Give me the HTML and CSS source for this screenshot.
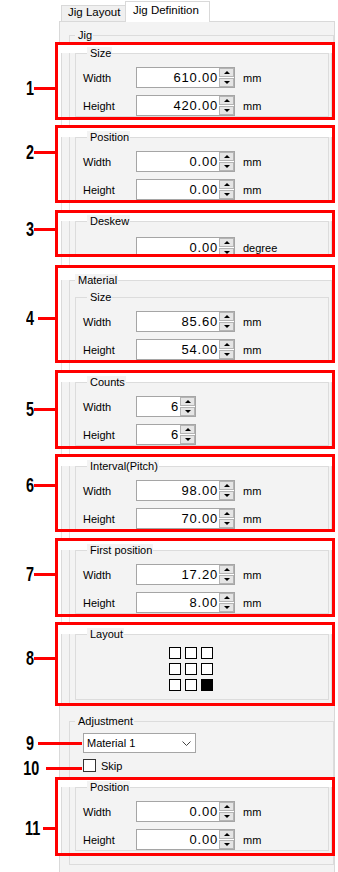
FILE: index.html
```html
<!DOCTYPE html>
<html lang="en">
<head>
    <meta charset="UTF-8">
    <meta name="viewport" content="width=device-width, initial-scale=1.0">
    <title>Jig Definition</title>
    <link rel="stylesheet" href="styles.css">
</head>
<body>
    <div class="tabs">
        <div class="tab">Jig Layout</div>
        <div class="tab active">Jig Definition</div>
    </div>

    <div class="panel head">
        <div class="lane"><span class="legend">Jig</span></div>
    </div>

    <!-- 1: jig size -->
    <div class="row r-size">
        <div class="callout"><span class="num">1</span><span class="line"></span></div>
        <div class="cut">
            <div class="pane"><div class="lane">
                <div class="group">
                    <span class="legend">Size</span>
                    <div class="field"><span class="label">Width</span><div class="spin"><span class="val">610.00</span><span class="btns"><i class="up"></i><i class="down"></i></span></div><span class="unit">mm</span></div>
                    <div class="field"><span class="label">Height</span><div class="spin"><span class="val">420.00</span><span class="btns"><i class="up"></i><i class="down"></i></span></div><span class="unit">mm</span></div>
                </div>
            </div></div>
        </div>
    </div>
    <div class="gap h5"></div>

    <!-- 2: jig position -->
    <div class="row r-pos">
        <div class="callout"><span class="num">2</span><span class="line"></span></div>
        <div class="cut">
            <div class="pane"><div class="lane">
                <div class="group">
                    <span class="legend">Position</span>
                    <div class="field"><span class="label">Width</span><div class="spin"><span class="val">0.00</span><span class="btns"><i class="up"></i><i class="down"></i></span></div><span class="unit">mm</span></div>
                    <div class="field"><span class="label">Height</span><div class="spin"><span class="val">0.00</span><span class="btns"><i class="up"></i><i class="down"></i></span></div><span class="unit">mm</span></div>
                </div>
            </div></div>
        </div>
    </div>
    <div class="gap h7"></div>

    <!-- 3: deskew -->
    <div class="row r-deskew">
        <div class="callout"><span class="num">3</span><span class="line"></span></div>
        <div class="cut">
            <div class="pane"><div class="lane">
                <div class="group">
                    <span class="legend">Deskew</span>
                    <div class="field"><span class="label"></span><div class="spin"><span class="val">0.00</span><span class="btns"><i class="up"></i><i class="down"></i></span></div><span class="unit">degree</span></div>
                </div>
            </div></div>
        </div>
    </div>
    <div class="gap h8"></div>

    <!-- 4: material size -->
    <div class="row r-mat">
        <div class="callout"><span class="num">4</span><span class="line"></span></div>
        <div class="cut">
            <div class="pane"><div class="lane top">
                <span class="legend">Material</span>
                <div class="group">
                    <span class="legend">Size</span>
                    <div class="field"><span class="label">Width</span><div class="spin"><span class="val">85.60</span><span class="btns"><i class="up"></i><i class="down"></i></span></div><span class="unit">mm</span></div>
                    <div class="field"><span class="label">Height</span><div class="spin"><span class="val">54.00</span><span class="btns"><i class="up"></i><i class="down"></i></span></div><span class="unit">mm</span></div>
                </div>
            </div></div>
        </div>
    </div>
    <div class="gap h7"></div>

    <!-- 5: counts -->
    <div class="row r-counts">
        <div class="callout"><span class="num">5</span><span class="line"></span></div>
        <div class="cut">
            <div class="pane"><div class="lane">
                <div class="group">
                    <span class="legend">Counts</span>
                    <div class="field"><span class="label">Width</span><div class="spin short"><span class="val">6</span><span class="btns"><i class="up"></i><i class="down"></i></span></div></div>
                    <div class="field"><span class="label">Height</span><div class="spin short"><span class="val">6</span><span class="btns"><i class="up"></i><i class="down"></i></span></div></div>
                </div>
            </div></div>
        </div>
    </div>
    <div class="gap h5"></div>

    <!-- 6: interval -->
    <div class="row r-pitch">
        <div class="callout"><span class="num">6</span><span class="line"></span></div>
        <div class="cut">
            <div class="pane"><div class="lane">
                <div class="group">
                    <span class="legend">Interval(Pitch)</span>
                    <div class="field"><span class="label">Width</span><div class="spin"><span class="val">98.00</span><span class="btns"><i class="up"></i><i class="down"></i></span></div><span class="unit">mm</span></div>
                    <div class="field"><span class="label">Height</span><div class="spin"><span class="val">70.00</span><span class="btns"><i class="up"></i><i class="down"></i></span></div><span class="unit">mm</span></div>
                </div>
            </div></div>
        </div>
    </div>
    <div class="gap h6"></div>

    <!-- 7: first position -->
    <div class="row r-first">
        <div class="callout"><span class="num">7</span><span class="line"></span></div>
        <div class="cut">
            <div class="pane"><div class="lane">
                <div class="group">
                    <span class="legend">First position</span>
                    <div class="field"><span class="label">Width</span><div class="spin"><span class="val">17.20</span><span class="btns"><i class="up"></i><i class="down"></i></span></div><span class="unit">mm</span></div>
                    <div class="field"><span class="label">Height</span><div class="spin"><span class="val">8.00</span><span class="btns"><i class="up"></i><i class="down"></i></span></div><span class="unit">mm</span></div>
                </div>
            </div></div>
        </div>
    </div>
    <div class="gap h5"></div>

    <!-- 8: layout -->
    <div class="row r-layout">
        <div class="callout"><span class="num">8</span><span class="line"></span></div>
        <div class="cut">
            <div class="pane"><div class="lane">
                <div class="group">
                    <span class="legend">Layout</span>
                    <div class="grid">
                        <span></span><span></span><span></span>
                        <span></span><span></span><span></span>
                        <span></span><span></span><span class="on"></span>
                    </div>
                </div>
            </div></div>
        </div>
    </div>

    <!-- 9, 10: adjustment -->
    <div class="panel adjust">
        <div class="lane top">
            <span class="legend">Adjustment</span>
            <div class="select">
                <span class="pointer p9"><span class="num">9</span></span>
                <span>Material 1</span>
                <svg width="9" height="5" viewBox="0 0 9 5"><path d="M0.5 0.5 L4.5 4.5 L8.5 0.5" fill="none" stroke="#444" stroke-width="1"/></svg>
            </div>
            <div class="check">
                <span class="box"><span class="pointer p10"><span class="num">10</span></span></span>
                <span class="check-label">Skip</span>
            </div>
        </div>
    </div>

    <!-- 11: adjustment position -->
    <div class="row r-adj">
        <div class="callout"><span class="num">11</span><span class="line"></span></div>
        <div class="cut">
            <div class="pane"><div class="lane">
                <div class="group">
                    <span class="legend">Position</span>
                    <div class="field"><span class="label">Width</span><div class="spin"><span class="val">0.00</span><span class="btns"><i class="up"></i><i class="down"></i></span></div><span class="unit">mm</span></div>
                    <div class="field"><span class="label">Height</span><div class="spin"><span class="val">0.00</span><span class="btns"><i class="up"></i><i class="down"></i></span></div><span class="unit">mm</span></div>
                </div>
            </div></div>
        </div>
    </div>

    <div class="panel tail">
        <div class="lane"></div>
    </div>
</body>
</html>
```

FILE: styles.css
```css
* {
    box-sizing: border-box;
}

body {
    margin: 0;
    width: 338px;
    height: 872px;
    overflow: hidden;
    background: #fff;
    color: #000;
    font-family: "Liberation Sans", Arial, sans-serif;
    font-size: 11px;
}

/* tab strip */
.tabs {
    display: flex;
    align-items: flex-end;
    height: 21px;
    padding-left: 61px;
}

.tab {
    width: 65px;
    height: 16px;
    padding: 0 0 0 6px;
    border: 1px solid #d9d9d9;
    border-bottom: none;
    background: #f0f0f0;
    font-size: 11.5px;
    line-height: 13px;
}

.tab.active {
    position: relative;
    z-index: 1;
    width: 85px;
    height: 21px;
    margin-left: -1px;
    margin-bottom: -1px;
    padding: 2px 0 0 7px;
    background: #fff;
}

/* plain tab page area */
.panel {
    margin-left: 59px;
    width: 276px;
    border-left: 1px solid #d9d9d9;
    border-right: 1px solid #d9d9d9;
    background: #f3f3f3;
}

.panel .lane {
    margin-left: 9px;
}

.panel.head {
    height: 21px;
    border-top: 1px solid #d9d9d9;
}

.panel.head .lane {
    height: 7px;
    margin-top: 13px;
    border-top: 1px solid #dcdcdc;
}

.panel.adjust {
    height: 71px;
    padding-top: 15px;
}

.panel.adjust .lane {
    height: 100%;
}

.panel.tail {
    height: 16px;
}

.panel.tail .lane {
    height: 9px;
    border-bottom: 1px solid #dcdcdc;
}

/* group boxes */
.lane {
    border-left: 1px solid #dcdcdc;
    border-right: 1px solid #dcdcdc;
}

.lane.top {
    border-top: 1px solid #dcdcdc;
}

.legend {
    display: block;
    width: max-content;
    margin: -7px 0 0 4px;
    padding: 0 1px 0 3px;
    background: #f3f3f3;
    line-height: 13px;
}

.lane > .legend {
    margin-left: 5px;
}

.group {
    margin: 9px 2px 0 5px;
    padding: 0 6px 0 7px;
    border: 1px solid #dcdcdc;
}

.field {
    display: flex;
    align-items: center;
    height: 21px;
    margin-top: 7px;
}

.label {
    width: 53px;
    flex: none;
}

.spin {
    display: flex;
    width: 99px;
    height: 21px;
    border: 1px solid #a5a5a5;
    background: #fff;
}

.spin.short {
    width: 60px;
}

.val {
    flex: 1;
    padding-right: 1px;
    text-align: right;
    font-size: 13px;
    line-height: 19px;
    letter-spacing: 0.8px;
}

.btns {
    display: grid;
    grid-template-rows: 1fr 1fr;
    gap: 1px;
    width: 15px;
}

.btns i {
    display: flex;
    align-items: center;
    justify-content: center;
    border: 1px solid #b4b4b4;
    background: #e5e5e5;
}

.btns i::before {
    content: "";
    border-left: 3px solid transparent;
    border-right: 3px solid transparent;
}

.btns .up::before {
    border-bottom: 3px solid #000;
}

.btns .down::before {
    border-top: 3px solid #000;
}

.unit {
    margin-left: 8px;
}

.grid {
    display: grid;
    grid-template-columns: repeat(3, 12px);
    grid-auto-rows: 12px;
    gap: 4px;
    margin: 6px 0 8px 86px;
}

.grid span {
    border: 1px solid #000;
    background: #fff;
}

.grid .on {
    background: #000;
}

/* annotated cut-outs */
.row {
    display: flex;
    align-items: flex-start;
}

.callout {
    display: flex;
    align-items: center;
    justify-content: flex-end;
    flex: none;
    width: 55px;
    height: 20px;
    box-sizing: content-box;
}

.num {
    display: block;
    font-family: "Liberation Sans", Arial, sans-serif;
    font-size: 20px;
    font-weight: bold;
    line-height: 20px;
    color: #000;
    transform: scaleX(0.72);
    transform-origin: right center;
}

.line {
    width: 21px;
    height: 3px;
    background: #f00;
}

.cut {
    flex: none;
    width: 280px;
    height: 78px;
    border: 3px solid #f00;
    background: #fff;
    overflow: hidden;
}

.pane {
    height: 100%;
    margin-left: 3px;
    padding-left: 7px;
    border-left: 1px solid #dadada;
    background: #f3f3f3;
}

.pane .lane {
    height: 100%;
}

.pane .lane.top {
    margin-top: 12px;
}

.gap {
    width: 9px;
    margin-left: 61px;
    border-left: 1px solid #e4e4e4;
    border-right: 1px solid #e4e4e4;
}

.gap.h5 { height: 5px; }
.gap.h6 { height: 6px; }
.gap.h7 { height: 7px; }
.gap.h8 { height: 8px; }

.r-size .callout { padding-top: 36px; }
.r-size .group { margin-top: 8px; }

.r-pos .callout { padding-top: 17px; }

.r-deskew .callout { padding-top: 9px; }
.r-deskew .cut { height: 47px; }
.r-deskew .group { margin-top: 8px; }
.r-deskew .field { margin-top: 9px; }

.r-mat .callout { padding-top: 43px; }
.r-mat .cut { height: 98px; }
.r-mat .group { margin-top: 10px; }
.r-mat .line { width: 17px; margin-left: 4px; }

.r-counts .callout { padding-top: 29px; }
.r-counts .cut { height: 79px; }

.r-pitch .callout { padding-top: 21px; }

.r-first .callout { padding-top: 26px; }
.r-first .cut { height: 79px; }

.r-layout .callout { padding-top: 26px; }
.r-layout .cut { height: 84px; }

.r-adj .callout { padding-top: 41px; }
.r-adj .cut { height: 79px; }
.r-adj .group { margin-top: 7px; }
.r-adj .line { width: 12px; margin-left: 3px; }

/* adjustment controls */
.select {
    position: relative;
    display: flex;
    align-items: center;
    justify-content: space-between;
    width: 113px;
    height: 20px;
    margin: 5px 0 0 13px;
    padding: 0 4px 0 3px;
    border: 1px solid #a5a5a5;
    background: #fff;
}

.check {
    display: flex;
    align-items: center;
    height: 13px;
    margin: 6px 0 0 13px;
}

.box {
    position: relative;
    width: 13px;
    height: 13px;
    border: 1px solid #333;
    background: #fff;
}

.check-label {
    margin-left: 5px;
}

.pointer {
    position: absolute;
    right: calc(100% + 2px);
    height: 3px;
    background: #f00;
}

.pointer .num {
    position: absolute;
    top: -9px;
}

.p9 {
    top: 8px;
    width: 44px;
}

.p9 .num {
    right: calc(100% + 4px);
}

.p10 {
    top: 7px;
    width: 36px;
}

.p10 .num {
    right: calc(100% + 7px);
}
```
